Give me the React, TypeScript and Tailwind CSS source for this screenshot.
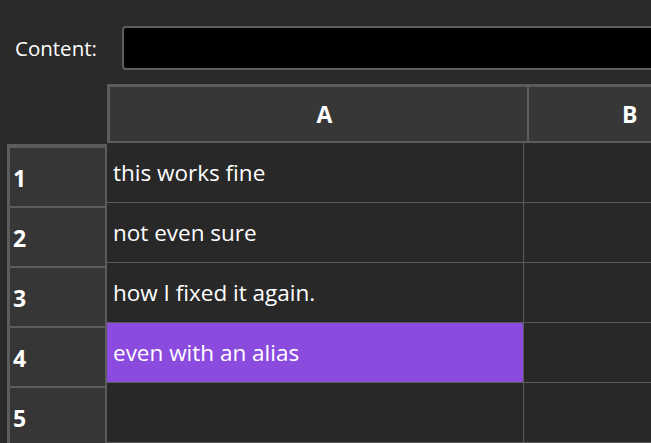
const rows = ["this works fine", "not even sure", "how I fixed it again.", "even with an alias", ""];

export default function App() {
  return (
    <div className="flex h-[443px] w-[651px] flex-col overflow-hidden bg-[#2a2a2a] font-['Open_Sans',sans-serif] text-white">
      <div className="flex h-[84px] shrink-0 items-start pt-[26px]">
        <span className="flex h-[44px] w-[122px] shrink-0 items-center pl-[15px] text-[20.5px]">Content:</span>
        <div className="h-[44px] w-[600px] shrink-0 rounded-[4px] border-2 border-[#5e5e5e] bg-black" />
      </div>

      <div className="flex flex-1">
        {/* row headers */}
        <div className="w-[107px] shrink-0 pl-[7px] pt-[60px]">
          <div className="border-l-[3px] border-r-2 border-t-[4px] border-[#5c5c5c] bg-[#363636]">
            {rows.map((_, i) => (
              <div
                key={i}
                className="flex h-[60px] items-center border-b-2 border-[#5c5c5c] pl-[3px] pt-[3px] text-[23px] font-bold"
              >
                {i + 1}
              </div>
            ))}
          </div>
        </div>

        {/* column headers + cells */}
        <div className="flex min-w-0 flex-1 flex-col">
          <div className="flex h-[59px] shrink-0 border-b-2 border-l-[3px] border-t-[3px] border-[#5c5c5c] bg-[#373737] text-[23px] font-bold">
            <div className="flex w-[419px] shrink-0 items-center justify-center border-r-2 border-[#5c5c5c] pl-[12px]">A</div>
            <div className="flex flex-1 items-center pl-[93px]">B</div>
          </div>
          <div className="bg-[#282828]">
            {rows.map((text, i) => (
              <div key={i} className="flex h-[60px] border-b border-[#5a5a5a]">
                <div
                  className={`flex w-[417px] shrink-0 items-center border-r border-[#5a5a5a] pl-[6px] text-[22.5px] ${
                    i === 3 ? "bg-[#8c4bdf]" : ""
                  }`}
                >
                  {text}
                </div>
                <div className="flex-1" />
              </div>
            ))}
          </div>
        </div>
      </div>
    </div>
  );
}
